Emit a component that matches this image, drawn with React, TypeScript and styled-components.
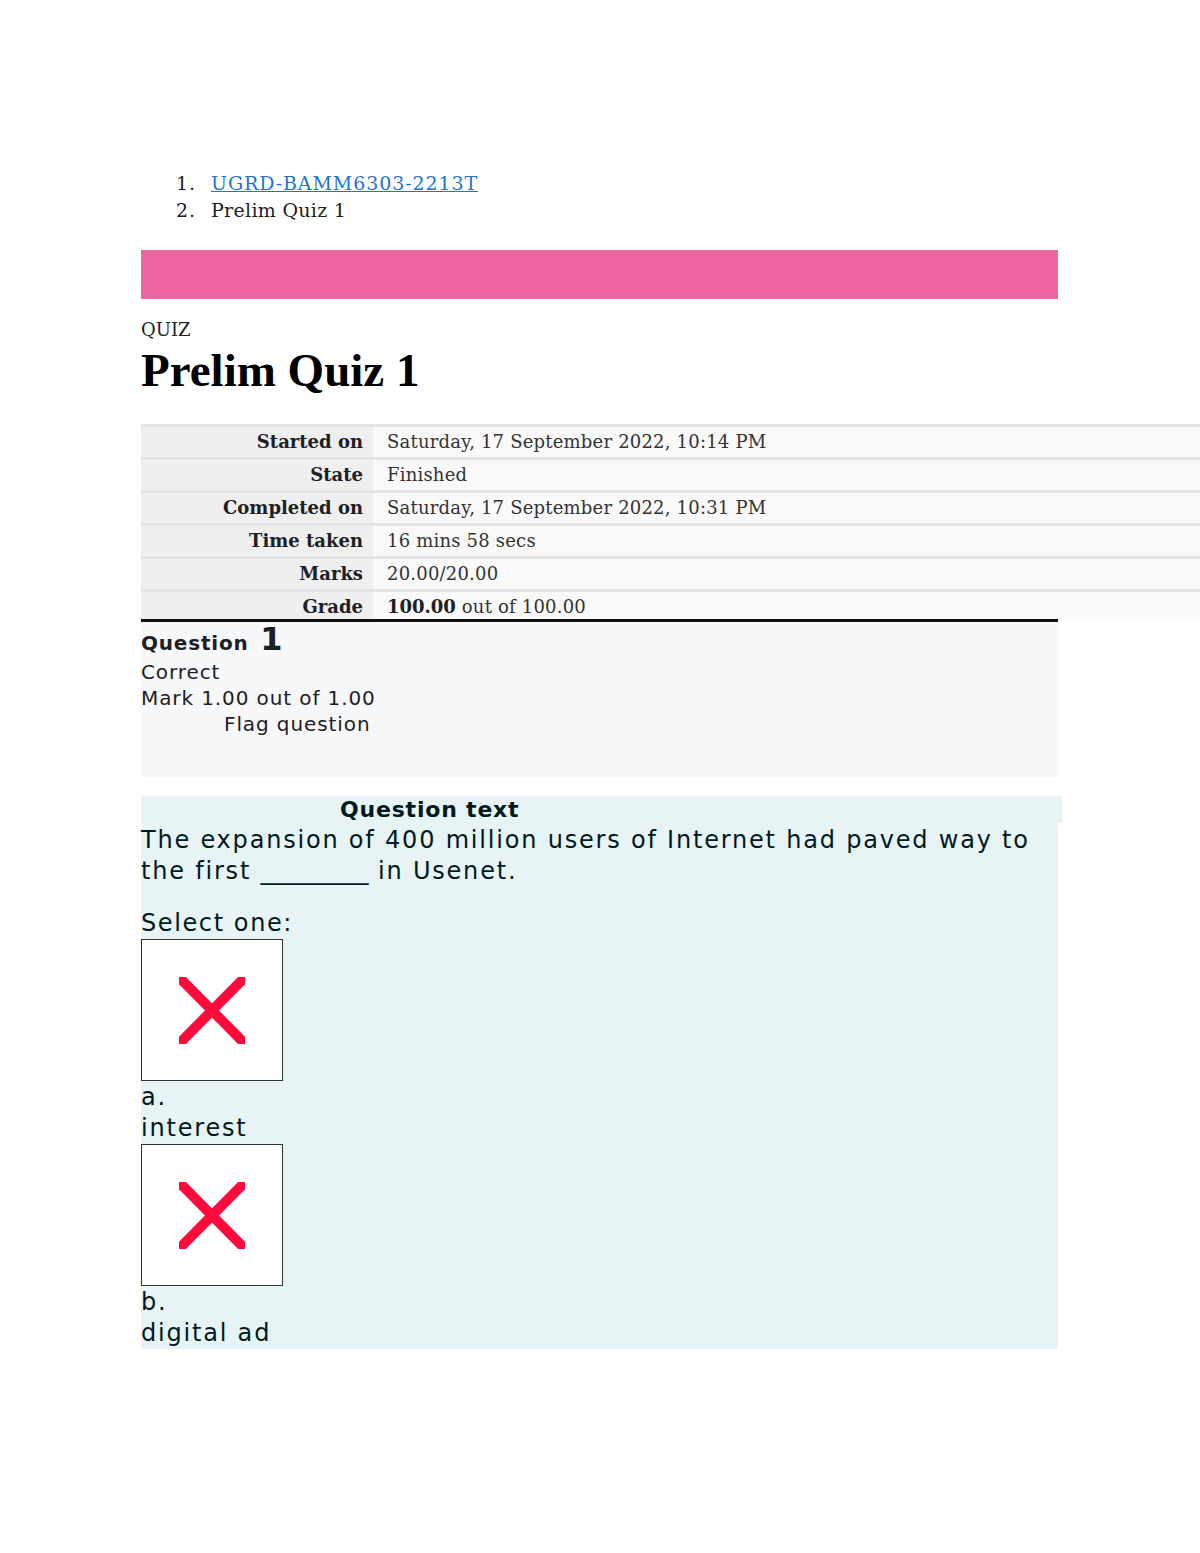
import React from "react";
import styled, { createGlobalStyle } from "styled-components";

const GlobalStyle = createGlobalStyle`
  html, body {
    margin: 0;
    padding: 0;
    background: #ffffff;
  }
  body {
    font-family: "DejaVu Serif", serif;
    color: #1d2125;
    overflow-x: hidden;
  }
`;

const summary = [
  { label: "Started on", value: "Saturday, 17 September 2022, 10:14 PM" },
  { label: "State", value: "Finished" },
  { label: "Completed on", value: "Saturday, 17 September 2022, 10:31 PM" },
  { label: "Time taken", value: "16 mins 58 secs" },
  { label: "Marks", value: "20.00/20.00" },
];

const options = [
  { letter: "a.", text: "interest" },
  { letter: "b.", text: "digital ad" },
];

function CrossIcon() {
  return (
    <svg width="66" height="67" viewBox="0 0 66 67">
      <line x1="-6" y1="-6" x2="72" y2="73" stroke="#ff0a3c" strokeWidth="10" />
      <line x1="72" y1="-6" x2="-6" y2="73" stroke="#ff0a3c" strokeWidth="10" />
    </svg>
  );
}

function App() {
  return (
    <Page>
      <GlobalStyle />
      <Breadcrumb>
        <Crumb>
          <CrumbLink href="#">UGRD-BAMM6303-2213T</CrumbLink>
        </Crumb>
        <Crumb>Prelim Quiz 1</Crumb>
      </Breadcrumb>

      <Banner />

      <Kicker>QUIZ</Kicker>
      <Title>Prelim Quiz 1</Title>

      <Summary>
        {summary.map((row) => (
          <SummaryRow key={row.label}>
            <SummaryLabel>{row.label}</SummaryLabel>
            <SummaryValue>{row.value}</SummaryValue>
          </SummaryRow>
        ))}
        <SummaryRow>
          <SummaryLabel>Grade</SummaryLabel>
          <SummaryValue>
            <b>100.00</b> out of 100.00
          </SummaryValue>
        </SummaryRow>
      </Summary>

      <InfoBox>
        <QuestionNo>
          Question <span>1</span>
        </QuestionNo>
        <InfoLine>Correct</InfoLine>
        <InfoLine>Mark 1.00 out of 1.00</InfoLine>
        <FlagLine>Flag question</FlagLine>
      </InfoBox>

      <Content>
        <ContentHeader>Question text</ContentHeader>
        <Prompt>
          The expansion of 400 million users of Internet had paved way to the
          first <Blank>_________</Blank> in Usenet.
        </Prompt>
        <SelectLabel>Select one:</SelectLabel>
        {options.map((opt) => (
          <Option key={opt.letter}>
            <ImageBox>
              <CrossIcon />
            </ImageBox>
            <OptionLetter>{opt.letter}</OptionLetter>
            <OptionText>{opt.text}</OptionText>
          </Option>
        ))}
      </Content>
    </Page>
  );
}

const Page = styled.div`
  padding: 170px 0 200px 141px;
  width: 917px;
`;

const Breadcrumb = styled.ol`
  margin: 0;
  padding: 0;
  list-style: none;
  counter-reset: crumb;
  font-family: "DejaVu Serif", serif;
  font-size: 19px;
  line-height: 27px;
  letter-spacing: 0.3px;
  color: #1d2125;
`;

const Crumb = styled.li`
  display: flex;
  counter-increment: crumb;

  &::before {
    content: counter(crumb) ".";
    width: 35px;
    padding-left: 35px;
    letter-spacing: 1px;
  }
`;

const CrumbLink = styled.a`
  color: #1f74cc;
  text-decoration: underline;
  letter-spacing: 0.9px;
`;

const Banner = styled.div`
  margin-top: 26px;
  height: 49px;
  background: #ec65a0;
`;

const Kicker = styled.div`
  margin-top: 19px;
  font-family: "DejaVu Serif", serif;
  font-size: 18px;
  line-height: 24px;
  color: #1d2125;
`;

const Title = styled.h1`
  margin: 0;
  font-family: "Liberation Serif", serif;
  font-weight: bold;
  font-size: 47px;
  line-height: 56px;
  color: #000;
`;

const Summary = styled.div`
  margin-top: 26px;
  width: 1059px;
`;

const SummaryRow = styled.div`
  display: flex;
  height: 30px;
  border-top: 3px solid #e2e4e8;
  font-family: "DejaVu Serif", serif;
  font-size: 18px;
  line-height: 30px;

  &:last-child {
    height: 27px;
  }
`;

const SummaryLabel = styled.div`
  width: 222px;
  padding-right: 10px;
  text-align: right;
  font-weight: bold;
  background: #efefef;
  color: #1d2125;
`;

const SummaryValue = styled.div`
  flex: 1;
  padding-left: 14px;
  background: #f9f9f9;
  color: #333;
  letter-spacing: 0.2px;

  b {
    color: #1d2125;
    letter-spacing: 0;
  }
`;

const InfoBox = styled.div`
  border-top: 3px solid #111;
  background: #f7f8fa;
  height: 155px;
  font-family: "DejaVu Sans", sans-serif;
  color: #1d2125;
`;

const QuestionNo = styled.div`
  padding-top: 1px;
  font-size: 20px;
  font-weight: bold;
  line-height: 32px;
  letter-spacing: 0.8px;

  span {
    font-size: 32px;
    margin-left: 4px;
  }
`;

const InfoLine = styled.div`
  font-size: 20px;
  line-height: 26px;
  letter-spacing: 0.9px;
`;

const FlagLine = styled(InfoLine)`
  padding-left: 83px;
`;

const Content = styled.div`
  margin-top: 19px;
  background: #e7f3f5;
  font-family: "DejaVu Sans", sans-serif;
  color: #001a1e;
`;

const ContentHeader = styled.div`
  margin-left: 199px;
  width: 722px;
  height: 27px;
  font-size: 22px;
  font-weight: bold;
  line-height: 27px;
  letter-spacing: 0.8px;
  background: #e7f3f5;
`;

const Prompt = styled.div`
  padding-top: 2px;
  font-size: 24px;
  line-height: 31px;
  letter-spacing: 1.8px;
`;

const Blank = styled.span`
  display: inline-block;
  letter-spacing: 0;
  line-height: 24px;
`;

const SelectLabel = styled.div`
  margin-top: 21px;
  font-size: 24px;
  line-height: 31px;
  letter-spacing: 1.6px;
`;

const Option = styled.div`
  display: flex;
  flex-direction: column;
  align-items: flex-start;
`;

const ImageBox = styled.div`
  width: 140px;
  height: 140px;
  border: 1px solid #333;
  background: #fff;
  display: flex;
  align-items: center;
  justify-content: center;
`;

const OptionText = styled.div`
  font-size: 24px;
  line-height: 31px;
  letter-spacing: 1.8px;
`;

const OptionLetter = styled(OptionText)`
  margin-top: 1px;
`;

export default App;
